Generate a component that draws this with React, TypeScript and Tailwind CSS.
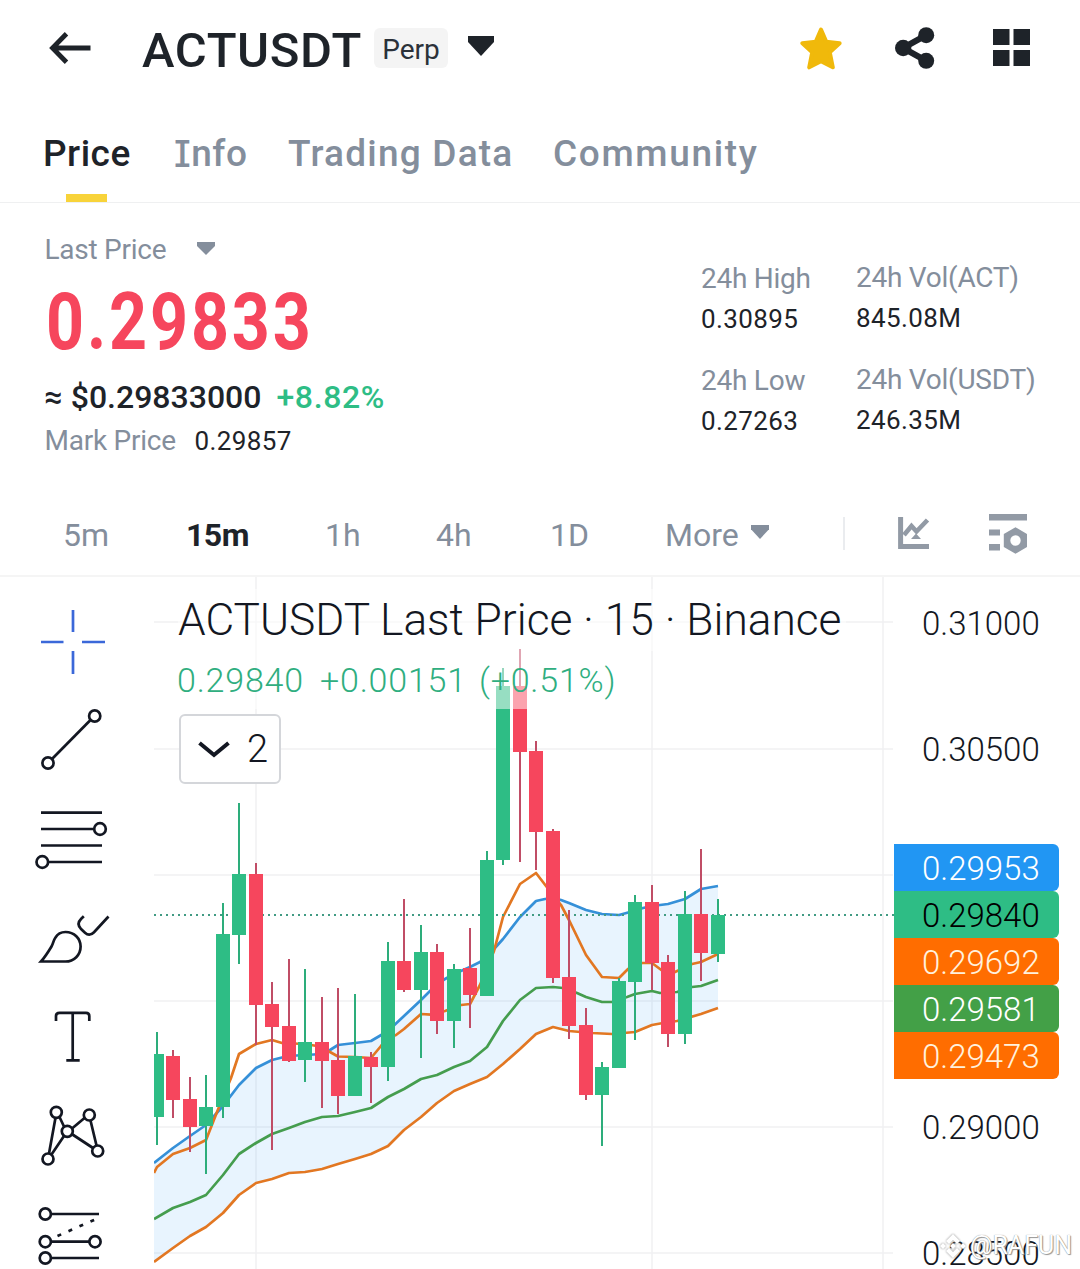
import type { ReactNode } from 'react';
import clsx from 'clsx';

const GREEN = '#2ebd85';
const RED = '#f6465d';

// [x, high, body top, body bottom, low, rising]
type Candle = [number, number, number, number, number, boolean];

const candles: Candle[] = [
  [157, 1032, 1054, 1117, 1145, true],
  [173, 1050, 1056, 1100, 1118, false],
  [190, 1077, 1099, 1127, 1152, false],
  [206, 1075, 1107, 1126, 1174, true],
  [223, 903, 934, 1107, 1118, true],
  [239, 803, 874, 935, 964, true],
  [256, 863, 874, 1005, 1045, false],
  [272, 982, 1004, 1027, 1150, false],
  [289, 959, 1026, 1061, 1062, false],
  [305, 969, 1042, 1060, 1082, true],
  [322, 997, 1042, 1061, 1108, false],
  [338, 988, 1060, 1096, 1114, false],
  [355, 994, 1056, 1096, 1096, true],
  [371, 1052, 1057, 1067, 1103, false],
  [388, 942, 961, 1067, 1081, true],
  [404, 899, 961, 990, 992, false],
  [421, 925, 952, 990, 1058, true],
  [437, 944, 952, 1021, 1034, false],
  [454, 964, 969, 1021, 1048, true],
  [470, 928, 968, 995, 1028, false],
  [487, 851, 860, 996, 996, true],
  [503, 668, 686, 860, 865, true],
  [520, 649, 686, 752, 862, false],
  [536, 741, 751, 832, 870, false],
  [553, 829, 831, 978, 983, false],
  [569, 910, 977, 1026, 1039, false],
  [586, 1008, 1025, 1095, 1100, false],
  [602, 1062, 1067, 1095, 1146, true],
  [619, 978, 981, 1068, 1068, true],
  [635, 895, 902, 982, 1040, true],
  [652, 885, 902, 963, 990, false],
  [668, 955, 962, 1034, 1047, false],
  [685, 891, 914, 1034, 1044, true],
  [701, 849, 914, 953, 981, false],
  [718, 899, 915, 954, 962, true],
];

const upperBand =
  '154,1163 173,1148 190,1136 206,1125 223,1106 239,1085 256,1068 272,1060 288,1056 305,1055 322,1054 330,1050 338,1045 355,1043 371,1041 388,1031 404,1016 421,1000 437,984 445,979 454,974 470,967 480,962 487,956 494,949 503,939 520,917 536,901 545,899 553,898 561,900 569,903 586,910 602,914 619,915 630,912 643,908 652,906 668,904 685,899 701,889 718,886';
const signal =
  '154,1173 157,1167 173,1154 190,1148 206,1140 217,1112 231,1078 239,1054 256,1044 272,1040 282,1043 305,1044 317,1046 330,1052 338,1056.5 355,1057 371,1058 381,1046 388,1038 396,1035 404,1029 421,1014 431,1014.6 445,1011 461,1005 470,1004 480,985 494,951 503,917 520,884 536,873 546,886 561,905 569,920 586,955 602,977 619,978 628,969 642,963 652,963 660,969 668,975 675,972 692,964 701,962 718,954';
const middleBand =
  '154,1219 173,1208 190,1202 206,1195 223,1175 239,1154 256,1143 272,1134 289,1128 305,1122 322,1117 338,1116 355,1112 371,1108 388,1097 404,1089 421,1079 437,1075 454,1067 470,1061 487,1047 503,1021 520,1000 536,988 553,987 563,988 577,993 586,997 602,1002 612,1002 627,997 635,994 652,991 660,993 677,992 692,987 701,986 718,980';
const lowerBand =
  '154,1262 173,1248 190,1236 206,1227 223,1213 239,1195 256,1183 272,1179 289,1173 305,1172 322,1169 338,1164 355,1159 371,1154 388,1146 404,1130 421,1117 437,1103 454,1091 470,1084 487,1077 503,1064 520,1049 536,1034 553,1027 569,1031 592,1033 612,1034 635,1032 652,1025 663,1023 677,1021 701,1014 718,1008';

const bandArea = `${upperBand} ${lowerBand.split(' ').reverse().join(' ')}`;

function Caret({ className }: { className: string }) {
  return (
    <svg viewBox="0 0 25 20" preserveAspectRatio="none" className={className} fill="currentColor">
      <path d="M0 0H25V6L12.5 20L0 6Z" />
    </svg>
  );
}

function Header() {
  return (
    <header className="flex h-24 items-center pl-[49px] text-[#1e2329]">
      <svg viewBox="0 0 42 32" className="h-8 w-[42px]" fill="none" stroke="currentColor" strokeWidth="4.8">
        <path d="M17.5 1.7L3.5 16L17.5 30.3M4 16H41.5" />
      </svg>
      <h1 className="ml-[51px] w-[232px] pt-1 text-[49px] leading-none font-medium tracking-[0.6px] whitespace-nowrap">
        ACTUSDT
      </h1>
      <span className="flex h-10 w-[74px] items-center justify-center rounded-md bg-[#f4f4f4] pt-1 text-[28px] leading-none text-[#2b3139]">
        Perp
      </span>
      <Caret className="-mt-1 ml-[20px] h-5 w-[26px]" />
      <svg viewBox="0 0 42 43" className="ml-[306px] h-[43px] w-[42px]" fill="#f0b90b" stroke="#f0b90b" strokeWidth="4" strokeLinejoin="round">
        <path d="M21 2.5L26.3 14.8L39.6 16.2L29.8 25.3L32.8 40.3L21 34.2L9.2 40.3L12.2 25.3L2.4 16.2L15.7 14.8Z" />
      </svg>
      <svg viewBox="0 0 40 42" className="ml-[53px] h-[42px] w-10" fill="currentColor">
        <path d="M8 21L31.5 8M8 21L31.5 34" stroke="currentColor" strokeWidth="6" />
        <circle cx="8.2" cy="21" r="8.2" />
        <circle cx="31.2" cy="8.2" r="8" />
        <circle cx="31.2" cy="33.8" r="8" />
      </svg>
      <svg viewBox="0 0 37 37" className="-mt-px ml-[58px] h-[37px] w-[37px]" fill="currentColor">
        <path d="M0 0H16.5V16H0ZM20.5 0H37V16H20.5ZM0 21H16.5V37H0ZM20.5 21H37V37H20.5Z" />
      </svg>
    </header>
  );
}

function Tabs() {
  return (
    <nav className="flex h-[107px] border-b border-[#eff0f1] pt-[5px] pl-[43px] text-[37px] leading-[105px] font-medium tracking-[0.5px] whitespace-nowrap text-[#848e9c]">
      <div className="relative w-[131px] text-[#1e2329]">
        Price
        <div className="absolute bottom-0 left-[23px] h-2 w-[41px] bg-[#f8d33a]" />
      </div>
      <div className="flex w-[114px]">
        <span className="font-['Inter'] [font-feature-settings:'cv08']">I</span>nfo
      </div>
      <div className="w-[265px] tracking-[1.2px]">Trading Data</div>
      <div className="tracking-[1.65px]">Community</div>
    </nav>
  );
}

function Stat({ label, value }: { label: string; value: string }) {
  return (
    <div className="h-[102px]">
      <p className="text-[28px] leading-10 tracking-[-0.25px] text-[#848e9c]">{label}</p>
      <p className="text-[26px] leading-10 tracking-[0.4px] text-[#1e2329]">{value}</p>
    </div>
  );
}

function PriceSummary() {
  return (
    <section className="flex h-[292px] whitespace-nowrap">
      <div className="w-[701px] pt-[27px] pl-[44.5px]">
        <div className="flex h-10 items-center text-[28px] tracking-[-0.25px] text-[#848e9c]">
          Last Price
          <Caret className="ml-[31px] -mt-1 h-[13px] w-[18px]" />
        </div>
        <p className="ml-[1px] h-[104px] origin-left scale-x-[0.84] text-[79px] leading-[104px] font-bold tracking-[3.4px] text-[#f6465d]">
          0.29833
        </p>
        <p className="flex h-[46px] items-center text-[32px] font-medium text-[#1e2329]">
          <span className="w-[232px]">≈ $0.29833000</span>
          <span className="tracking-[0.6px] text-[#2ebd85]">+8.82%</span>
        </p>
        <p className="flex h-[42px] items-center text-[28px] tracking-[-0.25px] text-[#848e9c]">
          <span className="w-[150px]">Mark Price</span>
          <span className="text-[26px] tracking-[0.4px] text-[#1e2329]">0.29857</span>
        </p>
      </div>
      <div className="w-[155px] pt-[56px]">
        <Stat label="24h High" value="0.30895" />
        <Stat label="24h Low" value="0.27263" />
      </div>
      <div className="pt-[55px]">
        <Stat label="24h Vol(ACT)" value="845.08M" />
        <Stat label="24h Vol(USDT)" value="246.35M" />
      </div>
    </section>
  );
}

function Intervals() {
  return (
    <div className="flex h-[82px] items-center border-b-2 border-[#f5f5f5] pl-[63px] text-[32px] whitespace-nowrap text-[#848e9c]">
      <span className="w-[123px]">5m</span>
      <span className="w-[139px] font-bold tracking-[-0.5px] text-[#1e2329]">15m</span>
      <span className="w-[111px]">1h</span>
      <span className="w-[114px]">4h</span>
      <span className="w-[115px]">1D</span>
      <span className="w-[86px]">More</span>
      <Caret className="-mt-1.5 h-[14px] w-[18px]" />
      <div className="-mt-1 ml-[74px] h-[33px] w-0.5 bg-[#eaecef]" />
      <svg viewBox="0 0 32 32" className="-mt-1 ml-[53px] h-8 w-8" fill="none" stroke="#929aa5" strokeWidth="5">
        <path d="M2.6 0V29.4H31" />
        <path d="M6 18L13.5 9L18.5 14.5L29.5 3" strokeWidth="4.6" />
        <path d="M13 22L18 16.5L23 22Z" fill="#929aa5" stroke="none" />
      </svg>
      <svg viewBox="0 0 38 40" className="-mt-0.5 ml-[59px] h-10 w-[38px]" fill="#929aa5">
        <path d="M0 0H38V6.5H0ZM0 15.5H11V21.5H0ZM0 30H11V36.5H0Z" />
        <path fillRule="evenodd" d="M26.5 13.3L38 20V33L26.5 39.8L14.8 33V20ZM26.5 21.3A5.2 5.2 0 1 0 26.5 31.7A5.2 5.2 0 1 0 26.5 21.3Z" />
      </svg>
    </div>
  );
}

function Tool({ children, color = '#131722' }: { children: ReactNode; color?: string }) {
  return (
    <svg viewBox="0 0 80 99" className="block h-[99px] w-20 shrink-0" fill="none" stroke={color} strokeWidth="2.7">
      {children}
    </svg>
  );
}

function DrawingTools() {
  return (
    <aside className="flex w-[154px] shrink-0 flex-col pt-[15px] pl-[33px]">
      <Tool color="#3b68d9">
        <path d="M40 18V40M40 59V82M8 50H30.5M49 50H72" />
      </Tool>
      <Tool>
        <path d="M57.5 29L19 68" />
        <circle cx="61.7" cy="25" r="5.6" />
        <circle cx="15" cy="72" r="5.6" />
      </Tool>
      <Tool>
        <path d="M8 22.6H69M8 39H61M8 55.5H69M15 72H69" />
        <circle cx="67" cy="39" r="5.8" />
        <circle cx="9.3" cy="72" r="5.8" />
      </Tool>
      <Tool>
        <path d="M8 72.5C12.5 67.5 15.5 62.5 18.5 57.5C20.5 54 20.3 51.5 22.5 48.5C24.5 45 28.3 43 32.5 43C41.2 43 47.6 49.3 47.6 57.5C47.6 66 41 72.5 32.5 72.5Z" />
        <path d="M50.8 27.2L48 30C45 33 45 36.6 47.8 39.7L52 43.7C55 46.5 58 46.3 61 43.2L75.5 27.5" />
      </Tool>
      <Tool>
        <path d="M23 33V28Q23 24.8 26.5 24.8H53Q56.3 24.8 56.3 28V33M39.7 25V72.3M33.3 72.3H46.7" />
      </Tool>
      <Tool>
        <path d="M22.5 30.8L16 66.5M26.5 30L31 39.5M18.5 67.5L31 49M39 41.5L51.5 31M39.5 47.5L60 61M57.5 33.5L63.5 58.5" />
        <circle cx="23.3" cy="25.3" r="5.5" />
        <circle cx="56.3" cy="28" r="5.5" />
        <circle cx="34.3" cy="44.3" r="5.5" />
        <circle cx="15" cy="72" r="5.5" />
        <circle cx="64.7" cy="64" r="5.5" />
      </Tool>
      <Tool>
        <path d="M18 28H66M18 55.7H56.5M18 72H66" />
        <path d="M24.5 50L62 33.5" strokeDasharray="4 8" />
        <circle cx="12.3" cy="28" r="5.6" />
        <circle cx="12.3" cy="55.7" r="5.6" />
        <circle cx="62" cy="55.7" r="5.6" />
        <circle cx="12.3" cy="72" r="5.6" />
      </Tool>
    </aside>
  );
}

function Chart() {
  return (
    <div className="relative w-[740px] shrink-0">
      <svg viewBox="154 577 740 692" className="block h-[692px] w-[740px]" fill="none">
        <g stroke="#f0f1f2" strokeWidth="1.5">
          {[622, 749, 875, 1001, 1127, 1253].map((y) => (
            <path key={y} d={`M154 ${y}H893`} />
          ))}
          {[256, 652, 883].map((x) => (
            <path key={x} d={`M${x} 577V1269`} />
          ))}
        </g>
        <polygon points={bandArea} fill="#2196f3" fillOpacity="0.1" />
        <g strokeWidth="2.7" strokeLinejoin="round">
          <polyline points={upperBand} stroke="#3590d8" />
          <polyline points={middleBand} stroke="#459d4e" />
          <polyline points={lowerBand} stroke="#e27722" />
          <polyline points={signal} stroke="#e27722" />
        </g>
        <path d="M154 915H894" stroke="#419b83" strokeWidth="2" strokeDasharray="2 4" />
        {candles.map(([x, high, top, bottom, low, up]) => (
          <g key={x} fill={up ? GREEN : RED}>
            <rect x={x - 1} y={high} width="2" height={low - high} fill={up ? '#2dad7b' : '#c04d66'} />
            <rect x={x - 7} y={top} width="14" height={bottom - top} />
          </g>
        ))}
      </svg>

      {/* Legend */}
      <div className="absolute top-[12px] left-6 text-[#131722]">
        <div className="flex h-[62px] w-[668px] items-center bg-white/50 text-[44.25px] leading-none font-light whitespace-nowrap">
          ACTUSDT Last Price · 15 · Binance
        </div>
        <div className="-ml-px flex h-[58px] w-[442px] items-center bg-white/50 text-[34px] leading-none font-light tracking-[0.8px] whitespace-nowrap text-[#2fae80]">
          <span className="w-[143px]">0.29840</span>
          <span className="w-[159px]">+0.00151</span>
          <span>(+0.51%)</span>
        </div>
        <div className="mt-[5px] ml-px flex h-[70px] w-[102px] items-center rounded-md border-2 border-[#d4d6da] bg-white pl-[17px]">
          <svg viewBox="0 0 32 17" className="h-[17px] w-8" fill="none" stroke="currentColor" strokeWidth="4">
            <path d="M1.5 2L16 14L30.5 2" />
          </svg>
          <span className="ml-[17px] text-[38px] leading-none font-light">2</span>
        </div>
      </div>
    </div>
  );
}

const tags = [
  { price: '0.29953', className: 'bg-[#2196f3] text-white' },
  { price: '0.29840', className: 'bg-[#2ebd85] text-black' },
  { price: '0.29692', className: 'bg-[#ff6d00] text-[#fff1dd]' },
  { price: '0.29581', className: 'bg-[#43a047] text-white' },
  { price: '0.29473', className: 'bg-[#ff6d00] text-[#fff1dd]' },
];

function PriceAxis() {
  return (
    <div className="w-[186px] shrink-0 text-[33px] leading-none font-light text-[#131722]">
      <div className="flex h-[94px] items-center pb-0.5 pl-7">0.31000</div>
      <div className="flex h-[157px] items-center pl-7">0.30500</div>
      <div className="mt-4 w-[165px]">
        {tags.map(({ price, className }) => (
          <div key={price} className={clsx('flex h-[47px] items-center rounded-r-md pt-0.5 pl-7', className)}>
            {price}
          </div>
        ))}
      </div>
      <div className="flex h-[97px] items-center pl-7">0.29000</div>
      <div className="flex h-[154px] items-center pl-7">0.28500</div>
    </div>
  );
}

function Watermark() {
  return (
    <div className="absolute top-[1232px] left-[940px] flex items-center gap-1 text-[25px] leading-7 whitespace-nowrap text-white [text-shadow:0_0_1px_#777,1px_1px_1px_#999]">
      <svg viewBox="0 0 26 26" className="h-[26px] w-[26px] drop-shadow-[0_0_1px_#888]" fill="#fff">
        <path d="M13 1L20 8L17 11L13 7L9 11L6 8ZM3 10L6 13L3 16L0 13ZM23 10L26 13L23 16L20 13ZM13 10L16 13L13 16L10 13ZM9 15L13 19L17 15L20 18L13 25L6 18Z" />
      </svg>
      @RAFUN
    </div>
  );
}

export default function App() {
  return (
    <main className="relative h-[1269px] w-[1080px] overflow-hidden bg-white font-['Roboto',sans-serif]">
      <Header />
      <Tabs />
      <PriceSummary />
      <Intervals />
      <div className="flex h-[692px] overflow-hidden">
        <DrawingTools />
        <Chart />
        <PriceAxis />
      </div>
      <Watermark />
    </main>
  );
}
